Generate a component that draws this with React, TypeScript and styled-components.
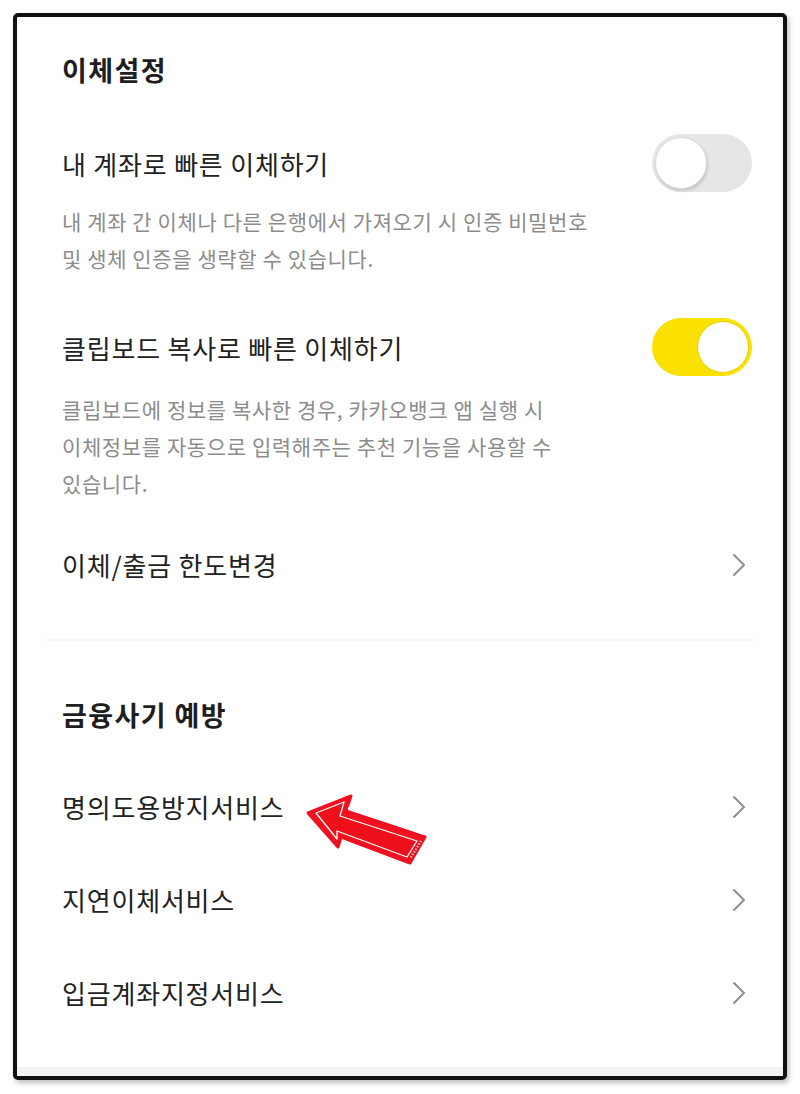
import styled, { createGlobalStyle } from "styled-components";

const GlobalStyle = createGlobalStyle`
    html, body {
        margin: 0;
        padding: 0;
        background: #fff;
    }
    body {
        font-family: "Noto Sans CJK KR", "Noto Sans", sans-serif;
        color: #222;
    }
`

const Page = styled.div`
    width: 800px;
    height: 1094px;
    box-sizing: border-box;
    padding: 13px 13px 14px 13px;
`

const Frame = styled.div`
    position: relative;
    height: 100%;
    box-sizing: border-box;
    border: 4px solid #111;
    border-radius: 5px;
    box-shadow: 2px 3px 5px rgba(0, 0, 0, 0.25);
    background: #fff;
    display: flex;
    flex-direction: column;
    overflow: hidden;
`

const Content = styled.div`
    flex: 1;
    padding: 33px 31px 0 45px;
`

const BottomStrip = styled.div`
    height: 9px;
    background: #f4f4f4;
`

const SectionTitle = styled.h2<{ $top?: number }>`
    margin: ${p => p.$top ?? 0}px 0 0;
    font-size: 27px;
    font-weight: 700;
    line-height: 40px;
    color: #1e1e1e;
    letter-spacing: 1.4px;
`

const ToggleRow = styled.div<{ $top: number }>`
    margin-top: ${p => p.$top}px;
    height: 64px;
    display: flex;
    align-items: center;
    justify-content: space-between;
`

const Label = styled.span`
    font-size: 26px;
    font-weight: 400;
    color: #222;
    letter-spacing: 0.8px;
`

const Desc = styled.p<{ $top: number }>`
    margin: ${p => p.$top}px 0 0;
    max-width: 560px;
    font-size: 21px;
    line-height: 37px;
    color: #8c8c8c;
    letter-spacing: 0.6px;
`

const Track = styled.div<{ $on: boolean }>`
    position: relative;
    width: 100px;
    height: 58px;
    border-radius: 29px;
    box-sizing: border-box;
    background: ${p => p.$on ? "#fae100" : "#e6e6e6"};
`

const Knob = styled.div<{ $on: boolean }>`
    position: absolute;
    top: 3px;
    left: ${p => p.$on ? "45px" : "3px"};
    width: 52px;
    height: 52px;
    border-radius: 50%;
    background: #fff;
    box-sizing: border-box;
    border: 1px solid ${p => p.$on ? "#e8d200" : "#dcdcdc"};
    box-shadow: ${p => p.$on ? "none" : "1px 2px 3px rgba(0, 0, 0, 0.15)"};
`

const LinkRow = styled.div<{ $top?: number }>`
    margin-top: ${p => p.$top ?? 0}px;
    height: 93px;
    display: flex;
    align-items: center;
    justify-content: space-between;
`

const Chevron = styled.svg`
    width: 14px;
    height: 24px;
    margin-right: 6px;
`

const Divider = styled.hr`
    margin: 28px -2px 0 -16px;
    border: none;
    height: 2px;
    background: #f3f3f3;
`

const LinkList = styled.div`
    margin-top: 25px;
`

// hand-drawn annotation arrow laid over the list
const ArrowMark = styled.svg`
    position: absolute;
    left: 273px;
    top: 763px;
    width: 150px;
    height: 95px;
`

const Toggle = ({ on }: { on: boolean }) => (
    <Track $on={on}>
        <Knob $on={on} />
    </Track>
)

const Arrow = () => (
    <Chevron viewBox="0 0 14 24">
        <path d="M2 2 L12 12 L2 22" fill="none" stroke="#8f8f8f" strokeWidth="2" strokeLinecap="round" strokeLinejoin="round" />
    </Chevron>
)

const links = ["명의도용방지서비스", "지연이체서비스", "입금계좌지정서비스"]

export default function App() {
    return (
        <>
            <GlobalStyle />
            <Page>
                <Frame>
                    <Content>
                        <SectionTitle>이체설정</SectionTitle>

                        <ToggleRow $top={41}>
                            <Label>내 계좌로 빠른 이체하기</Label>
                            <Toggle on={false} />
                        </ToggleRow>
                        <Desc $top={8}>
                            내 계좌 간 이체나 다른 은행에서 가져오기 시 인증 비밀번호<br />
                            및 생체 인증을 생략할 수 있습니다.
                        </Desc>

                        <ToggleRow $top={38}>
                            <Label>클립보드 복사로 빠른 이체하기</Label>
                            <Toggle on={true} />
                        </ToggleRow>
                        <Desc $top={12}>
                            클립보드에 정보를 복사한 경우, 카카오뱅크 앱 실행 시<br />
                            이체정보를 자동으로 입력해주는 추천 기능을 사용할 수<br />
                            있습니다.
                        </Desc>

                        <LinkRow $top={16}>
                            <Label>이체/출금 한도변경</Label>
                            <Arrow />
                        </LinkRow>

                        <Divider />

                        <SectionTitle $top={54}>금융사기 예방</SectionTitle>

                        <LinkList>
                            {links.map(t => (
                                <LinkRow key={t}>
                                    <Label>{t}</Label>
                                    <Arrow />
                                </LinkRow>
                            ))}
                        </LinkList>
                    </Content>
                    <BottomStrip />

                    <ArrowMark viewBox="290 780 150 95">
                        <polygon
                            points="308,813 351,796 346,811 425,837 410,863 341,837 338,847"
                            fill="#f5121e"
                            stroke="#ee1020"
                            strokeWidth="3"
                            strokeLinejoin="round"
                        />
                        <polygon
                            points="316,813 344,802 340,816 417,841 407,857 337,831 337,839"
                            fill="#f0101c"
                            stroke="#fff"
                            strokeWidth="1.3"
                            strokeLinejoin="round"
                        />
                        <polyline
                            points="348,808 423,834"
                            fill="none"
                            stroke="#fff"
                            strokeWidth="2"
                            strokeDasharray="1.2 1.8"
                        />
                        <polyline
                            points="421,841 410,859"
                            fill="none"
                            stroke="#fff"
                            strokeWidth="2"
                            strokeDasharray="1.2 1.8"
                        />
                    </ArrowMark>
                </Frame>
            </Page>
        </>
    )
}
